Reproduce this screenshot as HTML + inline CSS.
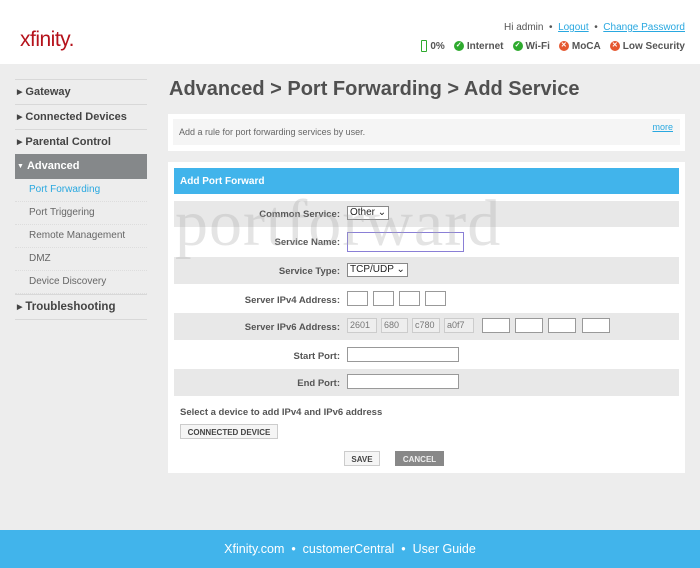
<!DOCTYPE html>
<html><head><style>
*{margin:0;padding:0;box-sizing:border-box}
body{width:700px;height:568px;overflow:hidden;font-family:"Liberation Sans",sans-serif;background:#ededed;position:relative}
.hdr{position:absolute;left:0;top:0;width:700px;height:64px;background:#fff}
.logo{position:absolute;left:20px;top:28px;font-size:21px;color:#b5121b;font-family:"Liberation Sans",sans-serif;letter-spacing:-0.5px}
.tr{position:absolute;right:15px;top:22px;font-size:10px;color:#555}
.tr a{color:#29a8e0;text-decoration:underline}
.st{position:absolute;right:15px;top:40px;font-size:10px;color:#555;font-weight:bold;display:flex;align-items:center;gap:3px}
.ok,.bad{display:inline-block;width:10px;height:10px;border-radius:50%;color:#fff;font-size:7px;line-height:10px;text-align:center;margin-left:6px}
.ok{background:#2eaa2e}.bad{background:#e5572f}
.side{position:absolute;left:15px;top:79px;width:132px}
.side .i{height:25px;border-top:1px solid #d8d8d8;font-size:11px;font-weight:bold;color:#444;padding:6px 0 0 2px}
.ar{font-size:7px;vertical-align:1px;margin-right:3px}
.side .a{background:#85888a;color:#fff;height:25px;font-size:11px;font-weight:bold;padding:6px 0 0 2px}
.side .s{height:23px;font-size:10px;color:#666;padding:5px 0 0 14px;border-bottom:1px dotted #ddd}
.ttl{position:absolute;left:169px;top:78px;font-size:20px;font-weight:bold;color:#505050}
.info{position:absolute;left:168px;top:114px;width:517px;height:37px;background:#fff}
.info div{position:absolute;left:5px;top:5px;width:507px;height:26px;background:#f5f5f5;font-size:9px;color:#666;padding:8px 6px}
.info a{position:absolute;right:12px;top:8px;font-size:9px;color:#29a8e0;text-decoration:underline}
.panel{position:absolute;left:168px;top:162px;width:517px;height:311px;background:#fff}
.ph{position:absolute;left:6px;top:6px;width:505px;height:26px;background:#41b4eb;color:#fff;font-size:10px;font-weight:bold;padding:8px 6px}
.row{position:absolute;left:6px;width:505px;font-size:9.5px;font-weight:bold;color:#555}
.row.g{background:#e8e8e8}
.row .l{position:absolute;right:339px;width:170px;text-align:right}
.row .f{position:absolute;left:173px}
.bx{position:absolute;border:1px solid #999;background:#fff;height:15px;top:0}
.g6{background:#eee;border-color:#ccc;padding:1px 2px}
.sel{display:inline-block;border:1px solid #888;background:#fff;height:14px;font-size:10px;font-weight:normal;color:#222;padding:0 2px;line-height:12px}
.wm{position:absolute;left:175px;top:186px;font-family:"Liberation Serif",serif;font-size:66px;color:rgba(170,170,170,0.32);letter-spacing:1px}
.btn{position:absolute;font-size:8px;font-weight:bold;border:1px solid #ccc;background:#f5f5f5;color:#444;text-align:center}
.ftr{position:absolute;left:0;top:530px;width:700px;height:38px;background:#41b4eb;color:#fff;font-size:12.5px;text-align:center;padding-top:12px}
</style></head><body>
<div class="hdr">
<div class="logo">xfinity.</div>
<div class="tr">Hi admin &nbsp;•&nbsp; <a>Logout</a> &nbsp;•&nbsp; <a>Change Password</a></div>
<div class="st"><span style="display:inline-block;width:6px;height:12px;border:1px solid #2eaa2e;border-radius:1px"></span>0% <span class="ok">✓</span>Internet <span class="ok">✓</span>Wi-Fi <span class="bad">✕</span>MoCA <span class="bad">✕</span>Low Security</div>
</div>
<div class="side">
<div class="i"><span class="ar">▶</span>Gateway</div>
<div class="i"><span class="ar">▶</span>Connected Devices</div>
<div class="i"><span class="ar">▶</span>Parental Control</div>
<div class="a"><span class="ar">▼</span>Advanced</div>
<div class="s" style="color:#29a8e0">Port Forwarding</div>
<div class="s">Port Triggering</div>
<div class="s">Remote Management</div>
<div class="s">DMZ</div>
<div class="s">Device Discovery</div>
<div class="i" style="font-size:11.5px"><span class="ar">▶</span>Troubleshooting</div>
<div style="border-top:1px solid #d8d8d8"></div>
</div>
<div class="ttl">Advanced &gt; Port Forwarding &gt; Add Service</div>
<div class="info"><div>Add a rule for port forwarding services by user.</div><a>more</a></div>
<div class="panel">
<div class="ph">Add Port Forward</div>
<div class="row g" style="top:39px;height:26px"><span class="l" style="top:8px">Common Service:</span><span class="f" style="top:5px"><span class="sel">Other ⌄</span></span></div>
<div class="row" style="top:67px;height:27px"><span class="l" style="top:8px">Service Name:</span><span class="f" style="top:3px"><span class="bx" style="width:117px;height:20px;border:1px solid #8a7fd6"></span></span></div>
<div class="row g" style="top:95px;height:27px"><span class="l" style="top:9px">Service Type:</span><span class="f" style="top:6px"><span class="sel">TCP/UDP ⌄</span></span></div>
<div class="row" style="top:124px;height:26px"><span class="l" style="top:9px">Server IPv4 Address:</span><span class="f" style="top:5px"><span class="bx" style="left:0;width:21px"></span><span class="bx" style="left:26px;width:21px"></span><span class="bx" style="left:52px;width:21px"></span><span class="bx" style="left:78px;width:21px"></span></span></div>
<div class="row g" style="top:151px;height:27px"><span class="l" style="top:9px">Server IPv6 Address:</span><span class="f" style="top:5px;font-weight:normal;font-size:9px;color:#777;white-space:nowrap"><span class="bx g6" style="left:0;width:30px">2601</span><span class="bx g6" style="left:34px;width:27px">680</span><span class="bx g6" style="left:65px;width:28px">c780</span><span class="bx g6" style="left:97px;width:30px">a0f7</span><span class="bx" style="left:135px;width:28px"></span><span class="bx" style="left:168px;width:28px"></span><span class="bx" style="left:201px;width:28px"></span><span class="bx" style="left:235px;width:28px"></span></span></div>
<div class="row" style="top:180px;height:27px"><span class="l" style="top:9px">Start Port:</span><span class="f" style="top:5px"><span class="bx" style="width:112px"></span></span></div>
<div class="row g" style="top:207px;height:27px"><span class="l" style="top:9px">End Port:</span><span class="f" style="top:5px"><span class="bx" style="width:112px"></span></span></div>
<div style="position:absolute;left:12px;top:245px;font-size:9.5px;font-weight:bold;color:#555">Select a device to add IPv4 and IPv6 address</div>
<div class="btn" style="left:12px;top:262px;width:98px;height:15px;padding-top:3px">CONNECTED DEVICE</div>
<div class="btn" style="left:176px;top:289px;width:36px;height:15px;padding-top:3px">SAVE</div>
<div class="btn" style="left:227px;top:289px;width:49px;height:15px;padding-top:3px;background:#888;color:#eee;border-color:#888">CANCEL</div>
</div>
<div class="wm">portforward</div>
<div class="ftr">Xfinity.com &nbsp;•&nbsp; customerCentral &nbsp;•&nbsp; User Guide</div>
</body></html>
